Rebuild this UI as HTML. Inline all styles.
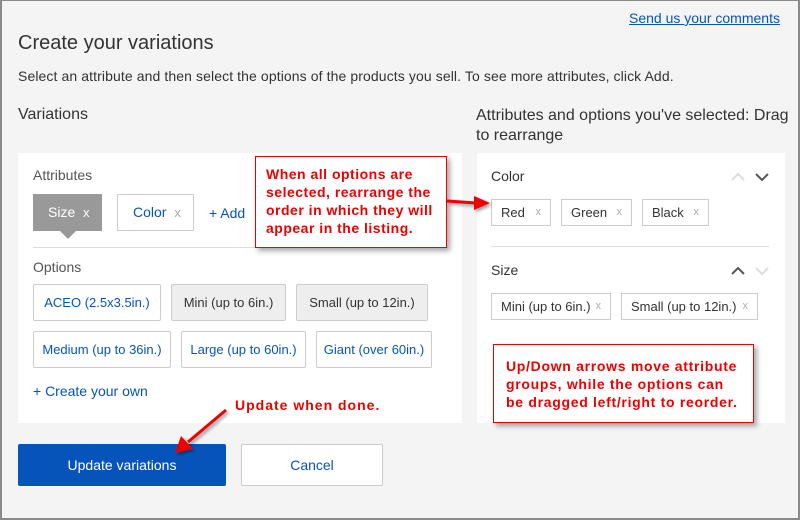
<!DOCTYPE html>
<html><head><style>
*{box-sizing:border-box;margin:0;padding:0}
body{width:800px;height:520px;background:#f4f4f4;font-family:"Liberation Sans",Arial,sans-serif;position:relative;overflow:hidden}
.frame{position:absolute;left:0;top:0;width:800px;height:520px;border:1px solid #8a8a8a;border-width:1px 2px 2px 2px}
.a{position:absolute;white-space:nowrap}
.panel{position:absolute;background:#fff}
.btn{position:absolute;border:1px solid #ccc;border-radius:2px;font-size:13px;text-align:center;background:#fff;color:#0654ba}
.sel{background:#eee;color:#333;border-color:#ccc}
.tag{position:absolute;border:1px solid #ccc;font-size:13px;color:#333;height:27px;line-height:25px;padding-left:9px;background:#fff}
.tag i{font-style:normal;color:#aaa;font-size:11px;position:absolute;right:9px}
.note{position:absolute;background:#fff;border:1px solid #e00;color:#e00;font-weight:bold;font-size:14px;letter-spacing:0.5px;line-height:18px;box-shadow:3px 3px 5px rgba(0,0,0,.35);white-space:nowrap}
</style></head><body>
<div class="frame"></div>
<div class="a" style="left:629px;top:10px;font-size:14px;color:#0654ba;text-decoration:underline">Send us your comments</div>
<div class="a" style="left:18px;top:32px;font-size:20px;color:#333">Create your variations</div>
<div class="a" style="left:18px;top:68px;font-size:14px;color:#333;letter-spacing:0.1px">Select an attribute and then select the options of the products you sell. To see more attributes, click Add.</div>
<div class="a" style="left:18px;top:106px;font-size:16px;color:#333">Variations</div>
<div class="a" style="left:476px;top:106px;font-size:16px;color:#333;line-height:20px">Attributes and options you've selected: Drag<br>to rearrange</div>

<div class="panel" style="left:18px;top:153px;width:444px;height:270px"></div>
<div class="a" style="left:33px;top:167px;font-size:14px;color:#555">Attributes</div>
<div class="a" style="left:33px;top:194px;width:69px;height:37px;background:#999;color:#fff;font-size:14px;line-height:37px;padding-left:15px">Size&nbsp; <span style="font-size:13px">x</span></div>
<div class="a" style="left:60px;top:231px;width:0;height:0;border-left:8px solid transparent;border-right:8px solid transparent;border-top:8px solid #999"></div>
<div class="a" style="left:117px;top:194px;width:77px;height:37px;border:1px solid #ccc;color:#0654ba;font-size:14px;line-height:35px;padding-left:15px">Color <span style="color:#aaa;font-size:13px;margin-left:4px">x</span></div>
<div class="a" style="left:209px;top:205px;font-size:14px;color:#0654ba">+ Add</div>
<div class="a" style="left:33px;top:247px;width:414px;height:1px;background:#ddd"></div>
<div class="a" style="left:33px;top:259px;font-size:14px;color:#555">Options</div>
<div class="btn" style="left:33px;top:284px;width:128px;height:37px;line-height:35px">ACEO (2.5x3.5in.)</div>
<div class="btn sel" style="left:171px;top:284px;width:115px;height:37px;line-height:35px">Mini (up to 6in.)</div>
<div class="btn sel" style="left:296px;top:284px;width:132px;height:37px;line-height:35px">Small (up to 12in.)</div>
<div class="btn" style="left:33px;top:331px;width:138px;height:37px;line-height:35px">Medium (up to 36in.)</div>
<div class="btn" style="left:181px;top:331px;width:125px;height:37px;line-height:35px">Large (up to 60in.)</div>
<div class="btn" style="left:316px;top:331px;width:116px;height:37px;line-height:35px">Giant (over 60in.)</div>
<div class="a" style="left:33px;top:383px;font-size:14px;color:#0654ba">+ Create your own</div>

<div class="panel" style="left:477px;top:153px;width:308px;height:270px"></div>
<div class="a" style="left:491px;top:168px;font-size:14px;color:#333">Color</div>
<svg class="a" style="left:730px;top:170px" width="46" height="12"><path d="M2 10l6-6 6 6" fill="none" stroke="#ddd" stroke-width="2"/><path d="M26 4l6 6 6-6" fill="none" stroke="#555" stroke-width="2"/></svg>
<div class="tag" style="left:491px;top:199px;width:60px">Red<i>x</i></div>
<div class="tag" style="left:561px;top:199px;width:71px">Green<i>x</i></div>
<div class="tag" style="left:642px;top:199px;width:67px">Black<i>x</i></div>
<div class="a" style="left:491px;top:246px;width:278px;height:1px;background:#ddd"></div>
<div class="a" style="left:491px;top:262px;font-size:14px;color:#333">Size</div>
<svg class="a" style="left:730px;top:264px" width="46" height="12"><path d="M2 10l6-6 6 6" fill="none" stroke="#555" stroke-width="2"/><path d="M26 4l6 6 6-6" fill="none" stroke="#ddd" stroke-width="2"/></svg>
<div class="tag" style="left:491px;top:293px;width:120px">Mini (up to 6in.)<i>x</i></div>
<div class="tag" style="left:621px;top:293px;width:137px">Small (up to 12in.)<i>x</i></div>

<div class="a" style="left:18px;top:444px;width:208px;height:42px;background:#0654ba;border-radius:2px;color:#fff;font-size:14px;text-align:center;line-height:42px">Update variations</div>
<div class="a" style="left:241px;top:444px;width:142px;height:42px;background:#fff;border:1px solid #ccc;border-radius:2px;color:#0654ba;font-size:14px;text-align:center;line-height:40px">Cancel</div>

<div class="note" style="left:255px;top:156px;width:192px;height:92px;padding:8px 0 0 10px">When all options are<br>selected, rearrange the<br>order in which they will<br>appear in the listing.</div>
<div class="note" style="left:493px;top:344px;width:261px;height:79px;padding:12px 0 0 12px;letter-spacing:0.7px">Up/Down arrows move attribute<br>groups, while the options can<br>be dragged left/right to reorder.</div>
<div class="a" style="left:235px;top:397px;color:#e00;font-weight:bold;font-size:14px;letter-spacing:1px">Update when done.</div>
<svg class="a" style="left:0;top:0" width="800" height="520">
<defs><filter id="s"><feDropShadow dx="2" dy="2" stdDeviation="1.5" flood-opacity=".4"/></filter></defs>
<g filter="url(#s)" fill="#e00" stroke="#e00">
<path d="M447 201L476 203" stroke-width="3"/><path d="M474 196L490 203L474 210Z" stroke="none"/>
<path d="M226 410L188 442" stroke-width="3"/><path d="M181 436L175 453L193 449Z" stroke="none"/>
</g></svg>
</body></html>
